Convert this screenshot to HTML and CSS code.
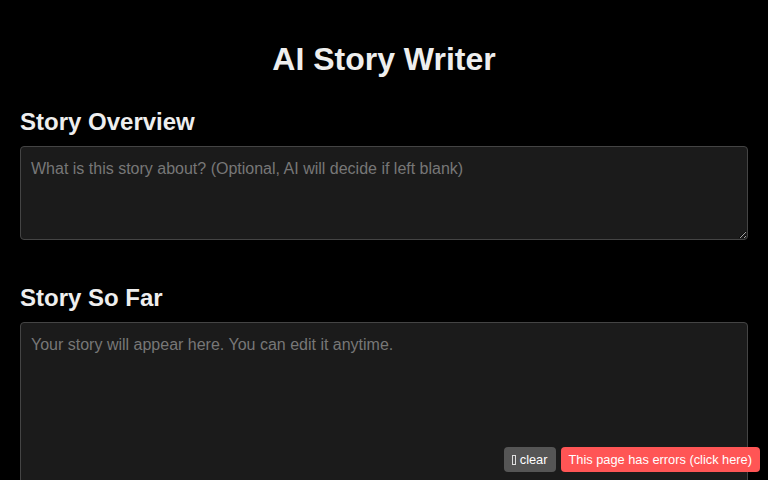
FILE: index.html
```html
<!DOCTYPE html>
<html>
<head>
<meta charset="utf-8">
<link rel="stylesheet" href="styles.css">
</head>
<body>
<div class="app">
  <h1 class="title">AI Story Writer</h1>
  <section class="section">
    <h2 class="heading">Story Overview</h2>
    <textarea class="field field-overview" placeholder="What is this story about? (Optional, AI will decide if left blank)"></textarea>
  </section>
  <section class="section">
    <h2 class="heading">Story So Far</h2>
    <textarea class="field field-story" placeholder="Your story will appear here. You can edit it anytime."></textarea>
  </section>
</div>
<div class="error-bar">
  <button class="btn btn-clear"><span class="icon-box"></span> clear</button>
  <button class="btn btn-error">This page has errors (click here)</button>
</div>
</body>
</html>
```

FILE: styles.css
```css
html, body {
  margin: 0;
  background: #000;
  overflow: hidden;
}
body {
  font-family: "Liberation Sans", Arial, sans-serif;
  color: #eee;
  padding: 20px;
  height: 480px;
  box-sizing: border-box;
}
.app {
  display: flex;
  flex-direction: column;
}
.title {
  font-size: 32px;
  font-weight: bold;
  text-align: center;
  margin: 21px 0 29px;
  line-height: 37px;
}
.section {
  display: flex;
  flex-direction: column;
  margin-bottom: 43px;
}
.heading {
  font-size: 24px;
  font-weight: bold;
  margin: 1px 0 10px;
  line-height: 28px;
}
.field {
  display: block;
  width: 100%;
  box-sizing: border-box;
  background: #1b1b1b;
  border: 1px solid #444;
  border-radius: 4px;
  color: #eee;
  font-family: "Liberation Sans", Arial, sans-serif;
  font-size: 16px;
  line-height: 1.4;
  padding: 11px 10px 9px;
  margin: 0;
}
.field::placeholder {
  color: #777;
}
.field-overview {
  height: 94px;
}
.field-story {
  height: 200px;
}
.error-bar {
  position: fixed;
  right: 8px;
  bottom: 8px;
  display: flex;
  gap: 5px;
}
.btn {
  border: none;
  border-radius: 4px;
  font-family: "Liberation Sans", Arial, sans-serif;
  font-size: 12.8px;
  height: 25px;
  padding: 0 8px;
  color: #fff;
}
.icon-box {
  display: inline-block;
  width: 2px;
  height: 8px;
  border: 1px solid #ddd;
  vertical-align: -1px;
}
.btn-clear {
  background: #555;
}
.btn-error {
  background: #f55;
}
```
